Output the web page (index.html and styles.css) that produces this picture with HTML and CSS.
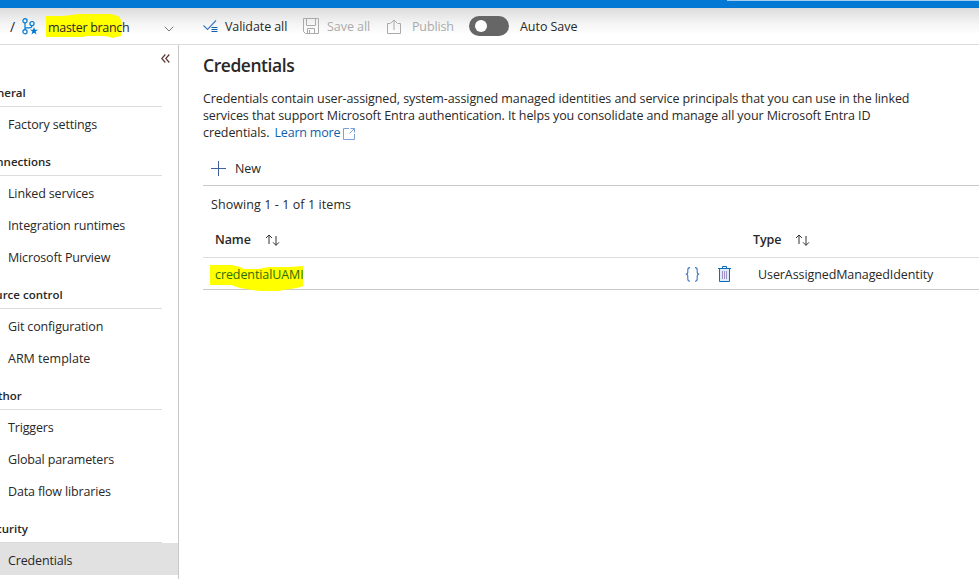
FILE: index.html
```html
<!DOCTYPE html>
<html lang="en">
<head>
  <meta charset="UTF-8" />
  <meta name="viewport" content="width=device-width, initial-scale=1.0"/>
  <title>Credentials</title>
  <link rel="stylesheet" href="styles.css">
</head>
<body>
  <div class="top-bar"><div class="search"></div></div>

  <div class="toolbar">
    <div class="branch">
      <span class="slash">/</span>
      <svg class="branch-icon" width="16" height="17" viewBox="0 0 16 17" fill="none" stroke="#0078d4" stroke-width="1.2">
        <circle cx="3" cy="2.8" r="2.1"/>
        <circle cx="3" cy="13.7" r="2.1"/>
        <circle cx="10" cy="5.6" r="2.1"/>
        <path d="M3 5v6.6M3 9.8h4.3q2.500 0 2.600-2.100"/>
        <path fill="#0078d4" stroke="none" d="M12 9l1 2.800h3l-2.400 1.800.9 2.900-2.500-1.800-2.500 1.800.9-2.900L8 11.800h3z"/>
      </svg>
      <span class="branch-name">
        <svg class="marker" width="78" height="24" viewBox="0 0 78 24"><path fill="#ff0" d="M0 2h17l8-1 7-1h32l5 1 5 2v2h1v17l-9 2-2-1-6-1H40l-2 1H0z"/></svg>
        <span class="label">master branch</span>
      </span>
      <svg class="chevron" width="10" height="6" viewBox="0 0 10 6" fill="none" stroke="#777"><path d="M.7.7L5 5 9.300.7"/></svg>
    </div>
    <div class="action validate">
      <svg width="16" height="14" viewBox="0 0 16 14" fill="none"><path stroke="#3a78c3" stroke-width="1.1" d="M.5 6.500l4 4L13 1.500"/><path stroke="#0f5fa8" d="M8.500 8.500h6M8.500 10.500h6M8.500 12.500h6"/></svg>
      <span>Validate all</span>
    </div>
    <div class="action disabled save">
      <svg width="16" height="16" viewBox="0 0 16 16" fill="none" stroke="#aaa"><path d="M.5.500h15v15H2.500l-2-2zM3.500.500v7h9v-7M4.500 15.500v-5h7v5M6.500 12v3.500"/></svg>
      <span>Save all</span>
    </div>
    <div class="action disabled publish">
      <svg width="14" height="15" viewBox="0 0 14 15" fill="none" stroke="#aaa"><path d="M3.500 4.500H.500v10h13v-10h-3M7 11V1M4 4l3-3 3 3"/></svg>
      <span>Publish</span>
    </div>
    <div class="toggle"><div class="knob"></div></div>
    <span class="auto-save">Auto Save</span>
  </div>

  <div class="page">
    <div class="sidebar">
      <div class="collapse">
        <svg width="9" height="9" viewBox="0 0 9 9" fill="none" stroke="#5a3a32" stroke-width="1.2"><path d="M4.300.500l-3.500 4 3.500 4M8.300.500l-3.500 4 3.500 4"/></svg>
      </div>
      <h4 class="general">General</h4>
      <a>Factory settings</a>
      <h4 class="connections">Connections</h4>
      <a>Linked services</a>
      <a>Integration runtimes</a>
      <a>Microsoft Purview</a>
      <h4 class="source">Source control</h4>
      <a>Git configuration</a>
      <a class="arm">ARM template</a>
      <h4 class="author">Author</h4>
      <a>Triggers</a>
      <a>Global parameters</a>
      <a>Data flow libraries</a>
      <h4 class="security">Security</h4>
      <a class="active">Credentials</a>
    </div>

    <div class="content">
      <h1>Credentials</h1>
      <p class="description">
        <span class="line1">Credentials contain user-assigned, system-assigned managed identities and service principals that you can use in the linked</span><br>
        <span class="line2">services that support Microsoft Entra authentication. It helps you consolidate and manage all your Microsoft Entra ID</span><br>
        <span>credentials.</span>
        <span class="learn-more">Learn more</span>
        <svg class="external" width="12" height="12" viewBox="0 0 12 12" fill="none" stroke="#7c9fd6"><path d="M6 .500H.500v11h11V6M7.500.500h4V4.500M11.500.500L6.500 5.500"/></svg>
      </p>

      <div class="new-row">
        <svg width="15" height="15" viewBox="0 0 15 15" fill="none" stroke="#3f5f9f"><path d="M7.500 0v15M0 7.500h15"/></svg>
        <span>New</span>
      </div>

      <div class="count">Showing 1 - 1 of 1 items</div>

      <div class="table">
        <div class="row head">
          <div class="name">Name
            <svg class="sort" width="15" height="12" viewBox="0 0 15 12" fill="none" stroke="#333"><path d="M4 10V1M1 4l3-3 3 3M11 2v9.300M8 8.300l3 3 3-3"/></svg>
          </div>
          <div class="type">Type
            <svg class="sort" width="15" height="12" viewBox="0 0 15 12" fill="none" stroke="#333"><path d="M4 10V1M1 4l3-3 3 3M11 2v9.300M8 8.300l3 3 3-3"/></svg>
          </div>
        </div>
        <div class="row item">
          <div class="name">
            <svg class="marker" width="93" height="27" viewBox="0 0 93 27"><path fill="#ff0" d="M0 0h22l8 2 4 2h14l5-1 6-1 20 0 14-1v20l-2 1-10 2-8 1-4 1H50l-8-1-12-2-6-2-2-1H0z"/></svg>
            <span class="label">credentialUAMI</span>
          </div>
          <div class="tools">
            <svg width="15" height="15" viewBox="0 0 15 15" fill="none" stroke="#3a78c3" stroke-width="1.1"><path d="M5 .600Q2.800.600 2.800 2.700v2.600Q2.800 7.300.700 7.300q2.100 0 2.100 2v2.800q0 2.200 2.200 2.200M10 .600q2.200 0 2.200 2.100v2.600q0 2 2.100 2-2.100 0-2.100 2v2.800q0 2.200-2.200 2.200"/></svg>
            <svg class="trash" width="13" height="16" viewBox="0 0 13 16" fill="none"><path fill="#dcecf8" stroke="#0f6cbd" d="M1.500 2.500h10v13h-10z"/><path stroke="#0f6cbd" d="M0 2.500h13M4.500 2V.500h4V2"/><path stroke="#a090c4" d="M4.500 5v8M6.500 5v8M8.500 5v8"/></svg>
          </div>
          <div class="type">UserAssignedManagedIdentity</div>
        </div>
      </div>
    </div>
  </div>
</body>
</html>
```
FILE: styles.css
```css
* {
  box-sizing: border-box;
}

body {
  margin: 0;
  height: 579px;
  overflow: hidden;
  background: #fff;
  color: #292827;
  font-family: "Segoe UI", "Open Sans", "Noto Sans", sans-serif;
  font-size: 12.5px;
  line-height: 17px;
  letter-spacing: -0.09px;
  white-space: nowrap;
}

svg {
  display: block;
  flex: none;
}

.top-bar {
  height: 8px;
  background: #0078d4;
}

.search {
  height: 1px;
  margin-left: 727px;
  background: #a3cdee;
}

.toolbar {
  display: flex;
  align-items: center;
  height: 37px;
  border-bottom: 1px solid #dcdcdc;
  background: linear-gradient(#dcdcdc, #f5f5f5 45%, #fff 75%);
}

.branch {
  display: flex;
  align-items: center;
  width: 203px;
  padding-left: 10px;
}

.slash {
  width: 12px;
  font-size: 14px;
}

.branch-name {
  position: relative;
  width: 117px;
  margin-left: 10px;
  padding-top: 2px;
  letter-spacing: -0.3px;
}

.marker {
  position: absolute;
  top: -3px;
  left: -2px;
}

.label {
  position: relative;
}

.chevron {
  margin: 5px 0 0 -1px;
}

.action {
  display: flex;
  align-items: center;
}

.validate {
  gap: 6px;
  width: 100px;
}

.save {
  gap: 8px;
  width: 84px;
  letter-spacing: -0.05px;
}

.publish {
  gap: 11px;
  width: 82px;
  letter-spacing: -0.15px;
}

.disabled {
  color: #aaa;
}

.toggle {
  width: 40px;
  height: 20px;
  padding: 4px 6px;
  border-radius: 10px;
  background: #666;
}

.knob {
  width: 12px;
  height: 12px;
  border-radius: 50%;
  background: #fff;
}

.auto-save {
  margin-left: 11px;
  letter-spacing: -0.05px;
}

.page {
  display: flex;
  height: 534px;
}

.sidebar {
  flex: none;
  width: 179px;
  overflow: hidden;
  border-right: 1px solid #c8c8c8;
}

.collapse {
  display: flex;
  justify-content: flex-end;
  height: 25px;
  padding: 9px 8px 0 0;
}

.sidebar h4 {
  height: 37px;
  margin: 0 16px 0 0;
  padding-top: 14px;
  border-bottom: 1px solid #dcdcdc;
  font-size: 11.5px;
  font-weight: 600;
  letter-spacing: 0;
  text-indent: -18px;
}

.sidebar .author {
  text-indent: -17px;
}

.sidebar .security {
  text-indent: -17px;
}

.sidebar a {
  display: block;
  height: 32px;
  padding: 9px 0 0 8px;
  letter-spacing: -0.15px;
}

.sidebar .arm {
  letter-spacing: 0;
}

.sidebar .active {
  background: #e1e1e1;
}

.content {
  flex: 1;
  padding: 7px 0 0 24px;
}

h1 {
  margin: 0;
  font-size: 17.5px;
  font-weight: 600;
  line-height: 27px;
  letter-spacing: -0.45px;
}

.description {
  height: 51px;
  margin: 11px 0 0;
}

.learn-more {
  margin-left: 2px;
  color: #0f5fae;
  letter-spacing: -0.2px;
}

.external {
  display: inline-block;
  vertical-align: -3px;
}

.new-row {
  display: flex;
  align-items: center;
  gap: 9px;
  height: 45px;
  padding: 10px 0 0 8px;
  border-bottom: 1px solid #c8c8c8;
}

.count {
  height: 36px;
  padding: 10px 0 0 8px;
  letter-spacing: 0.08px;
}

.row {
  display: flex;
  align-items: center;
  border-bottom: 1px solid #dcdcdc;
}

.head {
  height: 36px;
  font-weight: 600;
}

.head .name,
.head .type {
  display: flex;
  align-items: center;
  gap: 14px;
}

.head .name {
  width: 550px;
  padding-left: 12px;
}

.item {
  height: 32px;
  padding-top: 1px;
  border-color: #c8c8c8;
}

.item .name {
  position: relative;
  width: 482px;
  padding-left: 12px;
}

.item .marker {
  top: -1px;
  left: 7px;
}

.item .label {
  color: #2e6b00;
}

.tools {
  display: flex;
  align-items: center;
  gap: 18px;
  width: 73px;
}
```
